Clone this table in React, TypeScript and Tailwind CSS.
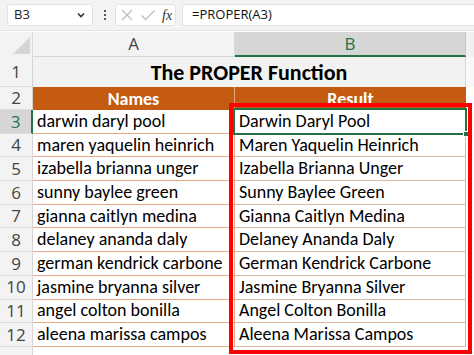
import React from "react";

const names = [
  "darwin daryl pool",
  "maren yaquelin heinrich",
  "izabella brianna unger",
  "sunny baylee green",
  "gianna caitlyn medina",
  "delaney ananda daly",
  "german kendrick carbone",
  "jasmine bryanna silver",
  "angel colton bonilla",
  "aleena marissa campos",
];

function proper(s: string) {
  return s
    .split(" ")
    .map((w) => w.charAt(0).toUpperCase() + w.slice(1))
    .join(" ");
}

const cellFont = { fontFamily: "Carlito, Lato, 'Liberation Sans', sans-serif" };

export default function App() {
  return (
    <div
      className="relative w-[474px] h-[355px] overflow-hidden bg-white"
      style={{ fontFamily: "'Segoe UI', 'Noto Sans', sans-serif" }}
    >
      {/* Formula bar */}
      <div className="flex h-[31px] items-center bg-[#f3f3f3] border-b border-[#e4e4e4]">
        <div className="ml-[7px] flex h-[22px] w-[86px] items-center justify-between rounded-[3px] border border-[#e2e2e2] bg-white pl-[6px] pr-[6px]">
          <span className="text-[13px] text-[#222]" style={{ fontFamily: "'Open Sans', sans-serif" }}>B3</span>
          <svg width="10" height="10" viewBox="0 0 10 10">
            <path d="M2 3.5 L5 6.5 L8 3.5" fill="none" stroke="#333" strokeWidth="1.6" />
          </svg>
        </div>
        <div className="ml-[6px] flex w-[12px] flex-col items-center gap-[2px]">
          <div className="h-[2px] w-[2px] bg-[#555]" />
          <div className="h-[2px] w-[2px] bg-[#555]" />
          <div className="h-[2px] w-[2px] bg-[#555]" />
        </div>
        <div className="ml-[4px] flex h-[22px] w-[61px] items-center gap-[6px] rounded-[3px] border border-[#e2e2e2] bg-white pl-[4px]">
          <svg width="14" height="14" viewBox="0 0 14 14">
            <path d="M2 2 L12 12 M12 2 L2 12" stroke="#bdbdbd" strokeWidth="1.3" />
          </svg>
          <svg width="16" height="14" viewBox="0 0 16 14">
            <path d="M1.5 7.5 L5.5 11.5 L14.5 2.5" fill="none" stroke="#bdbdbd" strokeWidth="1.3" />
          </svg>
          <span
            className="text-[14px] italic text-[#333]"
            style={{ fontFamily: "'Liberation Serif', serif" }}
          >
            <b className="font-normal">f</b>x
          </span>
        </div>
        <div className="ml-[6px] flex h-[22px] flex-1 items-center rounded-l-[3px] border border-r-0 border-[#e2e2e2] bg-white pl-[9px]">
          <span className="text-[13px] text-[#111]" style={{ fontFamily: "'Open Sans', sans-serif" }}>=PROPER(A3)</span>
        </div>
      </div>

      {/* Column headers */}
      <div className="flex h-[25px] mt-[1px] bg-[#f3f3f3]">
        <div className="relative w-[33px] border-r border-[#d9d9d9]">
          <svg className="absolute right-[2px] bottom-[3px]" width="17" height="17" viewBox="0 0 17 17">
            <path d="M17 0 L17 17 L0 17 Z" fill="#d5d5d5" />
          </svg>
        </div>
        <div
          className="flex w-[202px] items-center justify-center border-r border-b border-[#d6d6d6] text-[17px] text-[#444]"
          style={{ fontFamily: "'Open Sans', sans-serif" }}
        >
          A
        </div>
        <div
          className="flex w-[231px] items-center justify-center border-r border-[#c8c8c8] border-b-2 border-b-[#217346] bg-[#d6d6d6] text-[17px] text-[#217346]"
          style={{ fontFamily: "'Open Sans', sans-serif" }}
        >
          B
        </div>
        <div className="flex-1 bg-[#f0f0f0]" />
      </div>

      {/* Row 1 */}
      <div className="flex h-[30px]">
        <RowNum n={1} />
        <div
          className="flex w-[433px] items-center justify-center border-r border-[#d6d6d6] bg-[#f2f2f2] pt-[1px] text-[22px] font-bold text-black"
          style={cellFont}
        >
          The PROPER Function
        </div>
        <div className="flex-1 bg-[#f8f8f8]" />
      </div>

      {/* Row 2 */}
      <div className="flex h-[23px]">
        <RowNum n={2} />
        <div
          className="flex w-[202px] items-center justify-center border-r border-[#e9a77a] bg-[#c55a11] pt-[1px] text-[18px] font-bold text-white"
          style={cellFont}
        >
          Names
        </div>
        <div
          className="flex w-[231px] items-center justify-center bg-[#c55a11] pt-[2px] text-[18px] font-bold text-white"
          style={cellFont}
        >
          Result
        </div>
        <div className="flex-1 bg-white" />
      </div>

      {/* Data rows */}
      {names.map((n, i) => (
        <div key={i} className="flex h-[23.7px]">
          <RowNum n={i + 3} active={i === 0} />
          <div
            className="flex w-[202px] items-center border-r border-b border-[#e7aa84] pl-[4px] text-[18px] text-black"
            style={cellFont}
          >
            {n}
          </div>
          <div
            className="flex w-[231px] items-center border-r border-b border-[#dbb9a1] pl-[4px] text-[18px] text-black"
            style={cellFont}
          >
            {proper(n)}
          </div>
          <div className="flex-1 bg-white" />
        </div>
      ))}
      <div className="flex h-[20px]">
        <RowNum n={13} />
        <div className="flex-1" />
      </div>

      {/* Selection (B3) */}
      <div className="absolute left-[233px] top-[108px] h-[27px] w-[234px] border-2 border-[#217346]">
        <div className="absolute -right-[4px] -bottom-[4px] h-[6px] w-[6px] border border-white bg-[#217346]" />
      </div>

      {/* Red highlight box */}
      <div className="pointer-events-none absolute left-[229px] top-[103px] h-[251px] w-[243px] border-4 border-[#ff0000]" />
    </div>
  );
}

function RowNum({ n, active }: { n: number; active?: boolean }) {
  return (
    <div
      className={
        "flex w-[33px] shrink-0 items-center justify-center border-b border-[#dcdcdc] text-[17px] " +
        (active
          ? "bg-[#d6d6d6] text-[#217346] border-r-2 border-r-[#217346]"
          : "bg-[#f3f3f3] text-[#444] border-r border-r-[#d4d4d4]")
      }
      style={{ fontFamily: "'Open Sans', sans-serif" }}
    >
      {n === 13 ? "" : n}
    </div>
  );
}
